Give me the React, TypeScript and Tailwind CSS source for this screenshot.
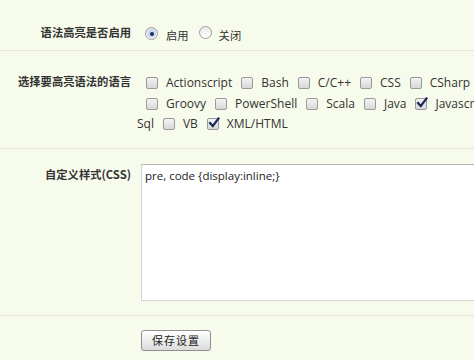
import React from 'react';

// Settings form: syntax highlight options

type Item = { label?: string; box?: boolean; checked?: boolean };

const lines: Item[][] = [
  [
    { box: true }, { label: 'Actionscript' },
    { box: true }, { label: 'Bash' },
    { box: true }, { label: 'C/C++' },
    { box: true }, { label: 'CSS' },
    { box: true }, { label: 'CSharp' },
  ],
  [
    { box: true }, { label: 'Groovy' },
    { box: true }, { label: 'PowerShell' },
    { box: true }, { label: 'Scala' },
    { box: true }, { label: 'Java' },
    { box: true, checked: true }, { label: 'Javascript' },
    { box: true },
  ],
  [
    { label: 'Sql' },
    { box: true }, { label: 'VB' },
    { box: true, checked: true }, { label: 'XML/HTML' },
  ],
];

function CheckBox({ checked }: { checked?: boolean }) {
  return (
    <span className="relative ml-[9px] mr-[8px] inline-block h-[12px] w-[12px] shrink-0 rounded-[2px] border border-[#9a9a9a] bg-gradient-to-b from-[#f4f4f4] to-[#d8d8d8]">
      {checked && (
        <svg className="absolute left-[0px] top-[-2px]" width="12" height="12" viewBox="0 0 12 12">
          <path d="M2 6 L4.8 9 L10.5 1.5" fill="none" stroke="#1b2a5c" strokeWidth="2.2" strokeLinecap="square" />
        </svg>
      )}
    </span>
  );
}

function Radio({ checked }: { checked?: boolean }) {
  return (
    <span className="inline-flex h-[13px] w-[13px] shrink-0 items-center justify-center rounded-full border border-[#9a9a9a] bg-gradient-to-b from-[#e8e8e8] to-[#ffffff]">
      {checked && (
        <span className="flex h-[9px] w-[9px] items-center justify-center rounded-full bg-[#c8d8f0]">
          <span className="h-[4px] w-[4px] rounded-full bg-[#1b2a5c]" />
        </span>
      )}
    </span>
  );
}

const labelCls =
  "w-[131px] shrink-0 text-right text-[11.3px] font-bold text-[#333] [font-family:'Noto_Sans_CJK_SC',sans-serif]";

export default function App() {
  return (
    <div className="h-[360px] w-[474px] overflow-hidden bg-[#f7fbec] text-[#333] [font-family:'Open_Sans','Noto_Sans_CJK_SC',sans-serif]">
      {/* row 1 */}
      <div className="flex h-[51px] items-start border-b border-[#e4e8d4] pt-[24px]">
        <div className={labelCls + ' leading-[16px]'}>语法高亮是否启用</div>
        <div className="ml-[14px] flex items-center text-[11.3px] leading-[16px] [font-family:'Noto_Sans_CJK_SC',sans-serif]">
          <Radio checked />
          <span className="ml-[8px] mt-[3px]">启用</span>
          <span className="ml-[10px]"><Radio /></span>
          <span className="ml-[7px] mt-[3px]">关闭</span>
        </div>
      </div>

      {/* row 2 */}
      <div className="flex h-[98px] items-start border-b border-[#e4e8d4] pt-[22px]">
        <div className={labelCls + ' leading-[16px]'}>选择要高亮语法的语言</div>
        <div className="ml-[6px] flex w-[400px] shrink-0 flex-col text-[12px]">
          {lines.map((line, i) => (
            <div key={i} className="flex h-[20.5px] items-center whitespace-nowrap">
              {line.map((it, j) =>
                it.box ? <CheckBox key={j} checked={it.checked} /> : <span key={j}>{it.label}</span>
              )}
            </div>
          ))}
        </div>
      </div>

      {/* row 3 */}
      <div className="flex h-[167px] items-start border-b border-[#e4e8d4] pt-[15px]">
        <div className={labelCls + ' mt-[2px] leading-[16px]'}>自定义样式(CSS)</div>
        <textarea
          className="ml-[10px] h-[137px] w-[400px] shrink-0 resize-none border border-[#d4d4d4] border-t-[#b8b8b8] bg-white px-[3px] py-[3px] text-[11.5px] leading-[16px] text-[#222] outline-none"
          defaultValue="pre, code {display:inline;}"
        />
      </div>

      {/* row 4 */}
      <div className="flex pt-[14px]">
        <div className="w-[131px] shrink-0" />
        <button className="ml-[10px] h-[21px] w-[70px] rounded-[3px] border border-[#8f8f8f] bg-gradient-to-b from-[#ffffff] to-[#dcdcdc] text-[11px] leading-[19px] tracking-[1px] text-[#222] [font-family:'Noto_Sans_CJK_SC',sans-serif]">
          保存设置
        </button>
      </div>
    </div>
  );
}
